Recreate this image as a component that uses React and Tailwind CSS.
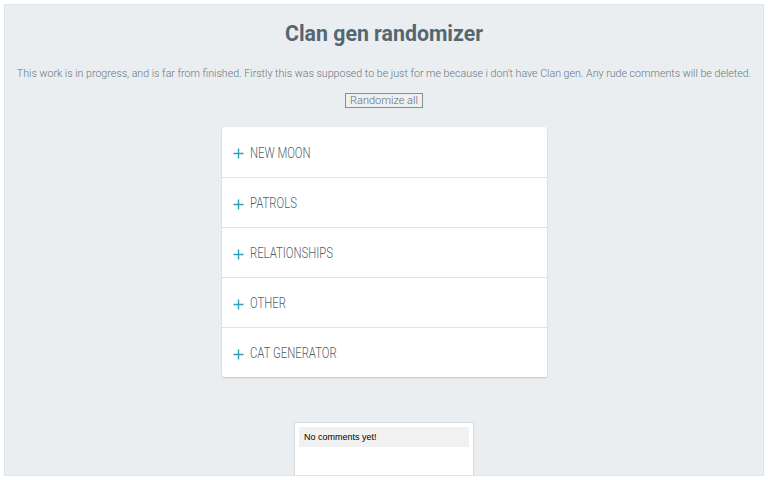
const sections = ['New Moon', 'Patrols', 'Relationships', 'Other', 'Cat Generator']

const Plus = () => (
  <svg width="11" height="11" viewBox="0 0 11 11" className="shrink-0">
    <path d="M5.5 0.5v10M0.5 5.5h10" stroke="#2aa3b3" strokeWidth="1.4" fill="none" />
  </svg>
)

export default function App() {
  return (
    <div className="w-[768px] h-[480px] bg-white p-1 overflow-hidden">
      <div className="h-[472px] bg-[#ebeef1] border border-[#e0e3e6] overflow-hidden flex flex-col items-center font-['Roboto',sans-serif]">
        <h1 className="mt-[14px] text-[21.3px] leading-[30px] font-bold text-[#546770]">Clan gen randomizer</h1>
        <p className="mt-[18px] text-[10.65px] leading-[14px] font-light text-[#667880] whitespace-nowrap">
          This work is in progress, and is far from finished. Firstly this was supposed to be just for me because i don't have Clan gen. Any rude comments will be deleted.
        </p>
        <button className="mt-[12px] h-[15px] px-[4px] border border-[#8a8f94] bg-[#eef0f2] text-[11px] leading-[13px] font-light text-[#5f6d75]">
          Randomize all
        </button>
        <div className="mt-[19px] w-[325px] bg-white shadow-[0_1px_2px_rgba(0,0,0,0.18)] rounded-[2px]">
          {sections.map((s, i) => (
            <div
              key={s}
              className={`h-[50px] flex items-center gap-[6px] pl-[11px] pt-[3px] ${i > 0 ? 'border-t border-[#dfe3e6]' : ''}`}
            >
              <Plus />
              <span className="inline-block origin-left scale-x-[0.73] text-[15.5px] uppercase font-light text-[#4f5f68] whitespace-nowrap">
                {s}
              </span>
            </div>
          ))}
        </div>
        <div className="mt-[45px] w-[180px] h-[60px] shrink-0 bg-white border border-[#d6d9dc] p-[4px]">
          <div className="h-[20px] bg-[#f1f1f1] px-[5px] text-[9px] leading-[20px] text-black font-['Liberation_Sans',sans-serif]">
            No comments yet!
          </div>
        </div>
      </div>
    </div>
  )
}
